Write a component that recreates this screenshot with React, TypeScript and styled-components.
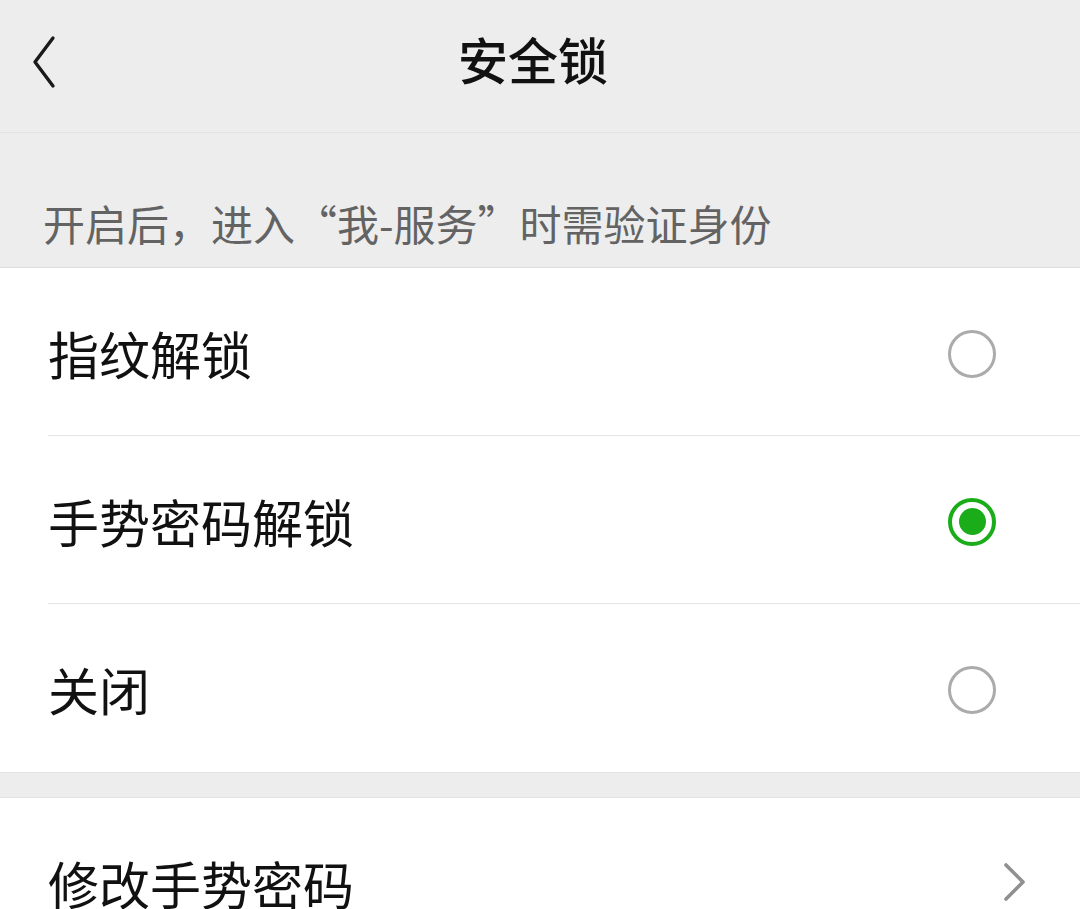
import React from "react";
import styled, { createGlobalStyle } from "styled-components";

const Global = createGlobalStyle`
  html, body { margin: 0; padding: 0; background: #ededed; }
  body { font-family: "Noto Sans CJK SC", "Noto Sans", sans-serif; }
  #root { width: 1080px; }
`;

const Page = styled.div`
  width: 1080px;
  min-height: 909px;
  background: #ededed;
  overflow: hidden;
`;

const Header = styled.header`
  position: relative;
  height: 133px;
  box-sizing: border-box;
  padding-bottom: 16px;
  display: flex;
  align-items: center;
  justify-content: center;
  background: #ededed;
  border-bottom: 1px solid #e3e3e3;
`;

const BackButton = styled.button`
  position: absolute;
  left: 32px;
  top: 34px;
  width: 26px;
  height: 56px;
  padding: 0;
  border: 0;
  background: none;
  display: flex;
  align-items: center;
  justify-content: center;
`;

const Title = styled.h1`
  margin: 0 14px 0 0;
  font-size: 50px;
  font-weight: 500;
  color: #111;
  line-height: 1;
`;

const Hint = styled.div`
  height: 135px;
  box-sizing: border-box;
  display: flex;
  align-items: flex-end;
  padding: 0 0 20px 43px;
  font-size: 42px;
  line-height: 48px;
  color: #636363;
  border-bottom: 1px solid #dedede;
`;

const Group = styled.section`
  background: #fff;
`;

const Gap = styled.div`
  height: 24px;
  background: #ededed;
  border-top: 1px solid #e2e2e2;
  border-bottom: 1px solid #e2e2e2;
`;

const Row = styled.div`
  padding-left: 48px;
  background: #fff;
`;

const RowInner = styled.div<{ $divider?: boolean }>`
  height: 167px;
  display: flex;
  align-items: center;
  justify-content: space-between;
  padding-right: 84px;
  border-bottom: 1px solid ${(p) => (p.$divider ? "#e5e5e5" : "transparent")};
`;

const Label = styled.span`
  font-size: 51px;
  line-height: 1;
  color: #111;
  margin-top: 4px;
`;

const Radio = styled.span<{ $checked?: boolean }>`
  width: 48px;
  height: 48px;
  box-sizing: border-box;
  border-radius: 50%;
  margin-top: 4px;
  border: ${(p) => (p.$checked ? "4px solid #1aad19" : "3px solid #ababab")};
  display: flex;
  align-items: center;
  justify-content: center;
  &::after {
    content: "";
    display: ${(p) => (p.$checked ? "block" : "none")};
    width: 27px;
    height: 27px;
    border-radius: 50%;
    background: #1aad19;
  }
`;

const ChevronBox = styled.span`
  margin-right: -32px;
  display: flex;
  align-items: center;
`;

const options = [
  { label: "指纹解锁", checked: false },
  { label: "手势密码解锁", checked: true },
  { label: "关闭", checked: false },
];

export default function App() {
  return (
    <Page lang="zh-CN">
      <Global />
      <Header>
        <BackButton aria-label="返回">
          <svg width="26" height="54" viewBox="0 0 26 54">
            <path d="M21 3 L3 27 L21 51" fill="none" stroke="#1a1a1a" strokeWidth="3.4" strokeLinecap="round" strokeLinejoin="round" />
          </svg>
        </BackButton>
        <Title>安全锁</Title>
      </Header>
      <Hint>开启后，进入“我-服务”时需验证身份</Hint>
      <Group>
        {options.map((o, i) => (
          <Row key={o.label}>
            <RowInner $divider={i < options.length - 1}>
              <Label>{o.label}</Label>
              <Radio $checked={o.checked} />
            </RowInner>
          </Row>
        ))}
      </Group>
      <Gap />
      <Group>
        <Row>
          <RowInner>
            <Label>修改手势密码</Label>
            <ChevronBox>
              <svg width="26" height="40" viewBox="0 0 26 40">
                <path d="M4 3 L21 20 L4 37" fill="none" stroke="#909090" strokeWidth="3.6" strokeLinecap="round" strokeLinejoin="round" />
              </svg>
            </ChevronBox>
          </RowInner>
        </Row>
      </Group>
    </Page>
  );
}
